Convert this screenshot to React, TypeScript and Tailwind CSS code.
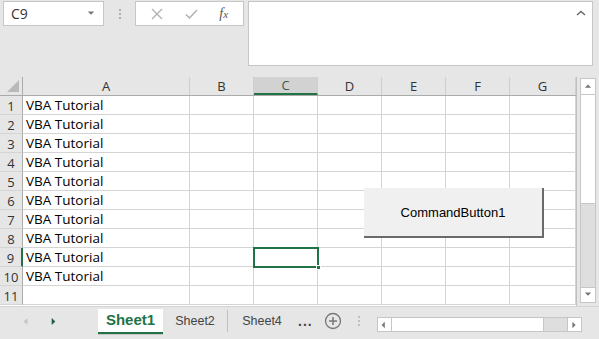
import React from "react";

const cols = [
  { name: "A", w: "w-[167px]" },
  { name: "B", w: "w-[64px]" },
  { name: "C", w: "w-[64px]" },
  { name: "D", w: "w-[64px]" },
  { name: "E", w: "w-[64px]" },
  { name: "F", w: "w-[64px]" },
  { name: "G", w: "w-[66px]" },
];

const rows = [1, 2, 3, 4, 5, 6, 7, 8, 9, 10, 11];

const Arrow = ({ dir, className }: { dir: "up" | "down" | "left" | "right"; className?: string }) => {
  const pts = {
    up: "1,6 5,2 9,6",
    down: "1,2 5,6 9,2",
    left: "6,1 2,5 6,9",
    right: "3,1 7,5 3,9",
  }[dir];
  return (
    <svg width="10" height="10" viewBox="0 0 10 10" className={className}>
      <polygon points={pts} fill="currentColor" />
    </svg>
  );
};

export default function App() {
  return (
    <div className="w-[599px] h-[339px] bg-[#e6e6e6] flex flex-col overflow-hidden [font-family:'Liberation_Sans',Arial,sans-serif] text-[#222]">
      {/* formula bar area */}
      <div className="h-[77px] flex items-start pt-px pl-[3px] shrink-0">
        <div className="w-[101px] h-[25px] bg-white border border-[#c6c6c6] flex items-center justify-between pl-[7px] pr-[8px] text-[14px] [font-family:'Open_Sans',sans-serif] text-[#333]">
          <span>C9</span>
          <Arrow dir="down" className="text-[#777] w-[8px] h-[8px]" />
        </div>
        <div className="w-[31px] h-[25px] flex items-center justify-center">
          <div className="flex flex-col gap-[2px]">
            <span className="w-[2px] h-[2px] bg-[#b0b0b0]" />
            <span className="w-[2px] h-[2px] bg-[#b0b0b0]" />
            <span className="w-[2px] h-[2px] bg-[#b0b0b0]" />
          </div>
        </div>
        <div className="w-[109px] h-[25px] bg-white border border-[#c6c6c6] flex items-center justify-around px-[4px]">
          <svg width="12" height="12" viewBox="0 0 12 12">
            <path d="M1 1 L11 11 M11 1 L1 11" stroke="#b0b0b0" strokeWidth="1.3" />
          </svg>
          <svg width="13" height="12" viewBox="0 0 13 12">
            <path d="M1 6.5 L4.5 10 L12 2" stroke="#b0b0b0" strokeWidth="1.5" fill="none" />
          </svg>
          <span className="[font-family:'Liberation_Serif',serif] italic text-[14px] text-[#555]">
            f<span className="text-[11px]">x</span>
          </span>
        </div>
        <div className="ml-[4px] w-[345px] h-[65px] bg-white border border-[#c6c6c6] flex justify-end pt-[8px] pr-[6px]">
          <svg width="10" height="6" viewBox="0 0 10 6">
            <path d="M1 5 L5 1.5 L9 5" stroke="#666" strokeWidth="1.4" fill="none" />
          </svg>
        </div>
      </div>

      {/* grid + vertical scrollbar */}
      <div className="flex h-[229px] shrink-0">
        <div className="relative w-[577px] bg-white border-r border-[#c0c0c0] overflow-hidden [font-family:'Open_Sans',sans-serif] leading-none">
          {/* header row */}
          <div className="flex h-[19px] bg-[#e6e6e6] border-b border-[#ababab]">
            <div className="w-[23px] shrink-0 border-r border-[#ababab] flex items-end justify-end pr-[3px] pb-[3px]">
              <svg width="12" height="12" viewBox="0 0 12 12">
                <polygon points="12,0 12,12 0,12" fill="#b9b9b9" />
              </svg>
            </div>
            {cols.map((c) => (
              <div
                key={c.name}
                className={`${c.w} shrink-0 flex items-center justify-center pt-px text-[13px] border-r border-[#cfcfcf] ${
                  c.name === "C" ? "bg-[#d2d2d2] text-[#3c5a48] border-b-2 border-b-[#217346]" : "text-[#333]"
                }`}
              >
                {c.name}
              </div>
            ))}
          </div>
          {rows.map((r) => (
            <div key={r} className="flex h-[19px]">
              <div
                className={`w-[23px] shrink-0 bg-[#e6e6e6] border-b border-[#d4d4d4] flex items-center justify-center pt-[2px] text-[13px] ${
                  r === 9 ? "bg-[#d2d2d2] border-r-2 border-r-[#217346]" : "border-r border-r-[#ababab]"
                } text-[#333]`}
              >
                {r}
              </div>
              {cols.map((c) => (
                <div
                  key={c.name}
                  className={`${c.w} shrink-0 border-r border-b border-[#d4d4d4] flex items-center pl-[3px] pt-[2px] text-[13.5px] text-black whitespace-nowrap`}
                >
                  {c.name === "A" && r <= 10 ? "VBA Tutorial" : ""}
                </div>
              ))}
            </div>
          ))}
          {/* selected cell C9 */}
          <div className="absolute left-[253px] top-[170px] w-[66px] h-[21px] border-2 border-[#217346]" />
          <div className="absolute left-[316px] top-[188px] w-[5px] h-[5px] bg-[#217346] border border-white" />
          {/* command button */}
          <div className="absolute left-[364px] top-[111px] w-[180px] h-[50px] bg-[#f0f0f0] border-r-2 border-b-2 border-[#6a6a6a] flex items-center justify-center text-[13px] text-black [font-family:'Liberation_Sans',Arial,sans-serif]">
            CommandButton1
          </div>
        </div>
        <div className="w-[22px] flex justify-start pl-[3px] pt-px pb-[3px]">
          <div className="w-[16px] flex flex-col border border-[#c6c6c6] bg-[#dedede]">
            <div className="h-[16px] bg-white border-b border-[#c6c6c6] flex items-center justify-center text-[#777]">
              <Arrow dir="up" className="w-[8px] h-[8px]" />
            </div>
            <div className="h-[109px] bg-white border-b border-[#c6c6c6]" />
            <div className="flex-1" />
            <div className="h-[15px] bg-white border-t border-[#c6c6c6] flex items-center justify-center text-[#777]">
              <Arrow dir="down" className="w-[8px] h-[8px]" />
            </div>
          </div>
        </div>
      </div>

      {/* sheet tabs */}
      <div className="flex-1 flex items-start border-t border-[#d4d4d4]">
        <div className="w-[98px] h-[28px] flex items-center pl-[22px] gap-[18px]">
          <Arrow dir="left" className="w-[9px] h-[9px] text-[#c4c4c4]" />
          <Arrow dir="right" className="w-[9px] h-[9px] text-[#1e5e3e]" />
        </div>
        <div className="w-[65px] h-[25px] mt-[2px] bg-white border-b-2 border-[#217346] shadow-[0_1px_0_#c8c8c8] flex items-center justify-center text-[15px] font-bold text-[#217346]">
          Sheet1
        </div>
        <div className="w-[65px] h-[22px] my-[3px] flex items-center justify-center text-[12.5px] text-[#444] border-r border-[#c0c0c0]">
          Sheet2
        </div>
        <div className="w-[68px] h-[28px] flex items-center justify-center text-[12.5px] text-[#444]">Sheet4</div>
        <div className="h-[28px] flex items-center text-[14px] font-bold text-[#444] tracking-[1px] pl-[2px]">...</div>
        <div className="h-[28px] flex items-center ml-[11px]">
          <svg width="18" height="18" viewBox="0 0 18 18">
            <circle cx="9" cy="9" r="7.5" stroke="#777" strokeWidth="1.3" fill="none" />
            <path d="M9 5 V13 M5 9 H13" stroke="#777" strokeWidth="1.5" />
          </svg>
        </div>
        <div className="h-[28px] w-[35px] flex items-center justify-center">
          <div className="flex flex-col gap-[2px]">
            <span className="w-[2px] h-[2px] bg-[#c0c0c0]" />
            <span className="w-[2px] h-[2px] bg-[#c0c0c0]" />
            <span className="w-[2px] h-[2px] bg-[#c0c0c0]" />
          </div>
        </div>
        <div className="mt-[10px] h-[15px] w-[205px] flex border border-[#c6c6c6] bg-[#dedede]">
          <div className="w-[14px] bg-white border-r border-[#c6c6c6] flex items-center justify-center text-[#777]">
            <Arrow dir="left" className="w-[8px] h-[8px]" />
          </div>
          <div className="w-[152px] bg-white border-r border-[#c6c6c6]" />
          <div className="flex-1" />
          <div className="w-[14px] bg-white border-l border-[#c6c6c6] flex items-center justify-center text-[#777]">
            <Arrow dir="right" className="w-[8px] h-[8px]" />
          </div>
        </div>
      </div>
    </div>
  );
}
